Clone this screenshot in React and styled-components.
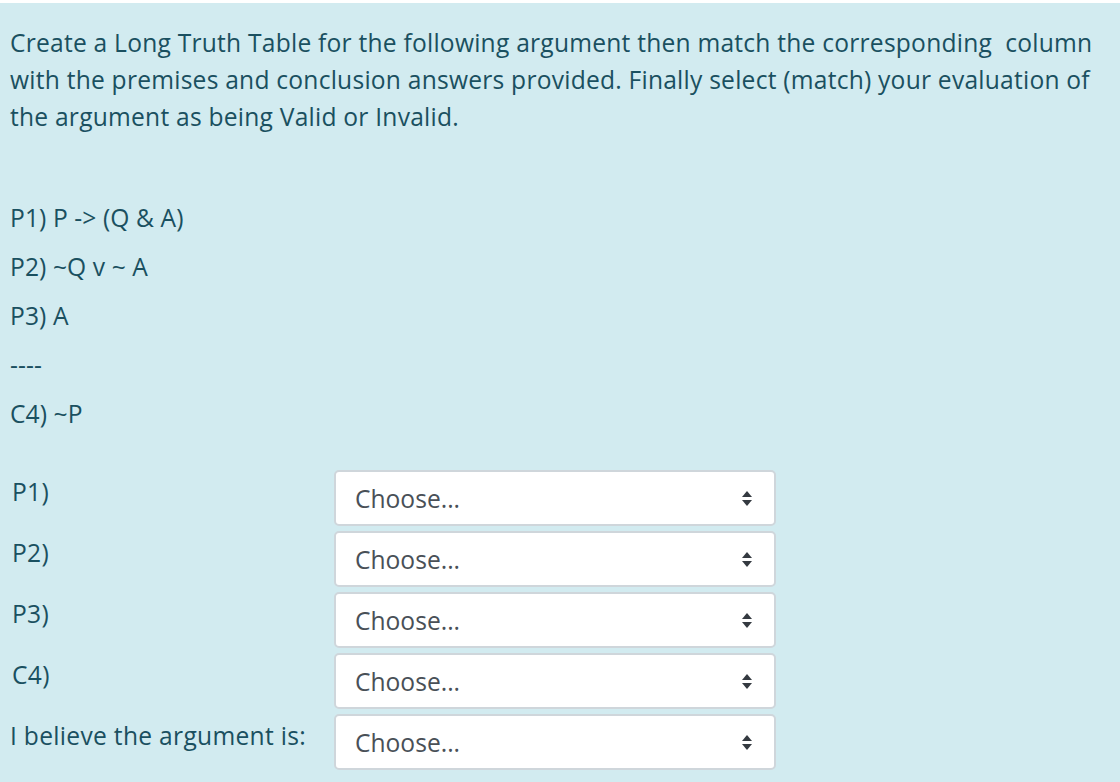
import React from 'react';
import styled, {createGlobalStyle} from 'styled-components';

const GlobalStyle = createGlobalStyle`
  html, body {
    margin: 0;
    padding: 0;
    background: #ffffff;
  }
  body {
    font-family: "Open Sans", "Liberation Sans", sans-serif;
  }
`;

const Panel = styled.div`
  margin-top: 3px;
  min-height: 779px;
  background-color: #d2ebf0;
  color: #1a5060;
  padding: 21px 0 0 10px;
  box-sizing: border-box;
  font-size: 24.6px;
`;

const Intro = styled.p`
  margin: 0 0 66px;
  line-height: 37px;
  width: 1100px;
  letter-spacing: 0.23px;
`;

const Premise = styled.p`
  margin: 0 0 16px;
  line-height: 33px;
  white-space: pre;
  letter-spacing: 0.1px;
`;

const Answers = styled.div`
  margin-top: 40px;
  display: flex;
  flex-direction: column;
  gap: 5px;
`;

const Row = styled.div`
  display: grid;
  grid-template-columns: 324px 442px;
  align-items: start;
`;

const Label = styled.label`
  padding-top: 5px;
  line-height: 33px;
  letter-spacing: 0.3px;
  padding-left: ${p => p.$indent || 0}px;
`;

const SelectBox = styled.div`
  height: 56px;
  box-sizing: border-box;
  border: 2px solid #cfd6db;
  border-radius: 5px;
  background: #ffffff;
  display: flex;
  align-items: center;
  justify-content: space-between;
  padding: 0 22px 0 19px;
  color: #495057;
  cursor: pointer;
`;

const Arrows = () => (
  <svg width="10" height="15" viewBox="0 0 10 15">
    <path d="M5 0 L10 6 L0 6 Z" fill="#343a40" />
    <path d="M0 9 L10 9 L5 15 Z" fill="#343a40" />
  </svg>
);

const premises = ['P1) P -> (Q & A)', 'P2) ~Q v ~ A', 'P3) A', '----', 'C4) ~P'];
const rows = [
  {label: 'P1)', indent: 2},
  {label: 'P2)', indent: 2},
  {label: 'P3)', indent: 2},
  {label: 'C4)', indent: 2},
  {label: 'I believe the argument is:', indent: 0},
];

export default function App() {
  return (
    <>
      <GlobalStyle />
      <Panel>
        <Intro>
          Create a Long Truth Table for the following argument then match the corresponding&nbsp; column
          with the premises and conclusion answers provided. Finally select (match) your evaluation of
          the argument as being Valid or Invalid.
        </Intro>
        {premises.map(p => (
          <Premise key={p}>{p}</Premise>
        ))}
        <Answers>
          {rows.map(r => (
            <Row key={r.label}>
              <Label $indent={r.indent}>{r.label}</Label>
              <SelectBox>
                <span>Choose...</span>
                <Arrows />
              </SelectBox>
            </Row>
          ))}
        </Answers>
      </Panel>
    </>
  );
}
